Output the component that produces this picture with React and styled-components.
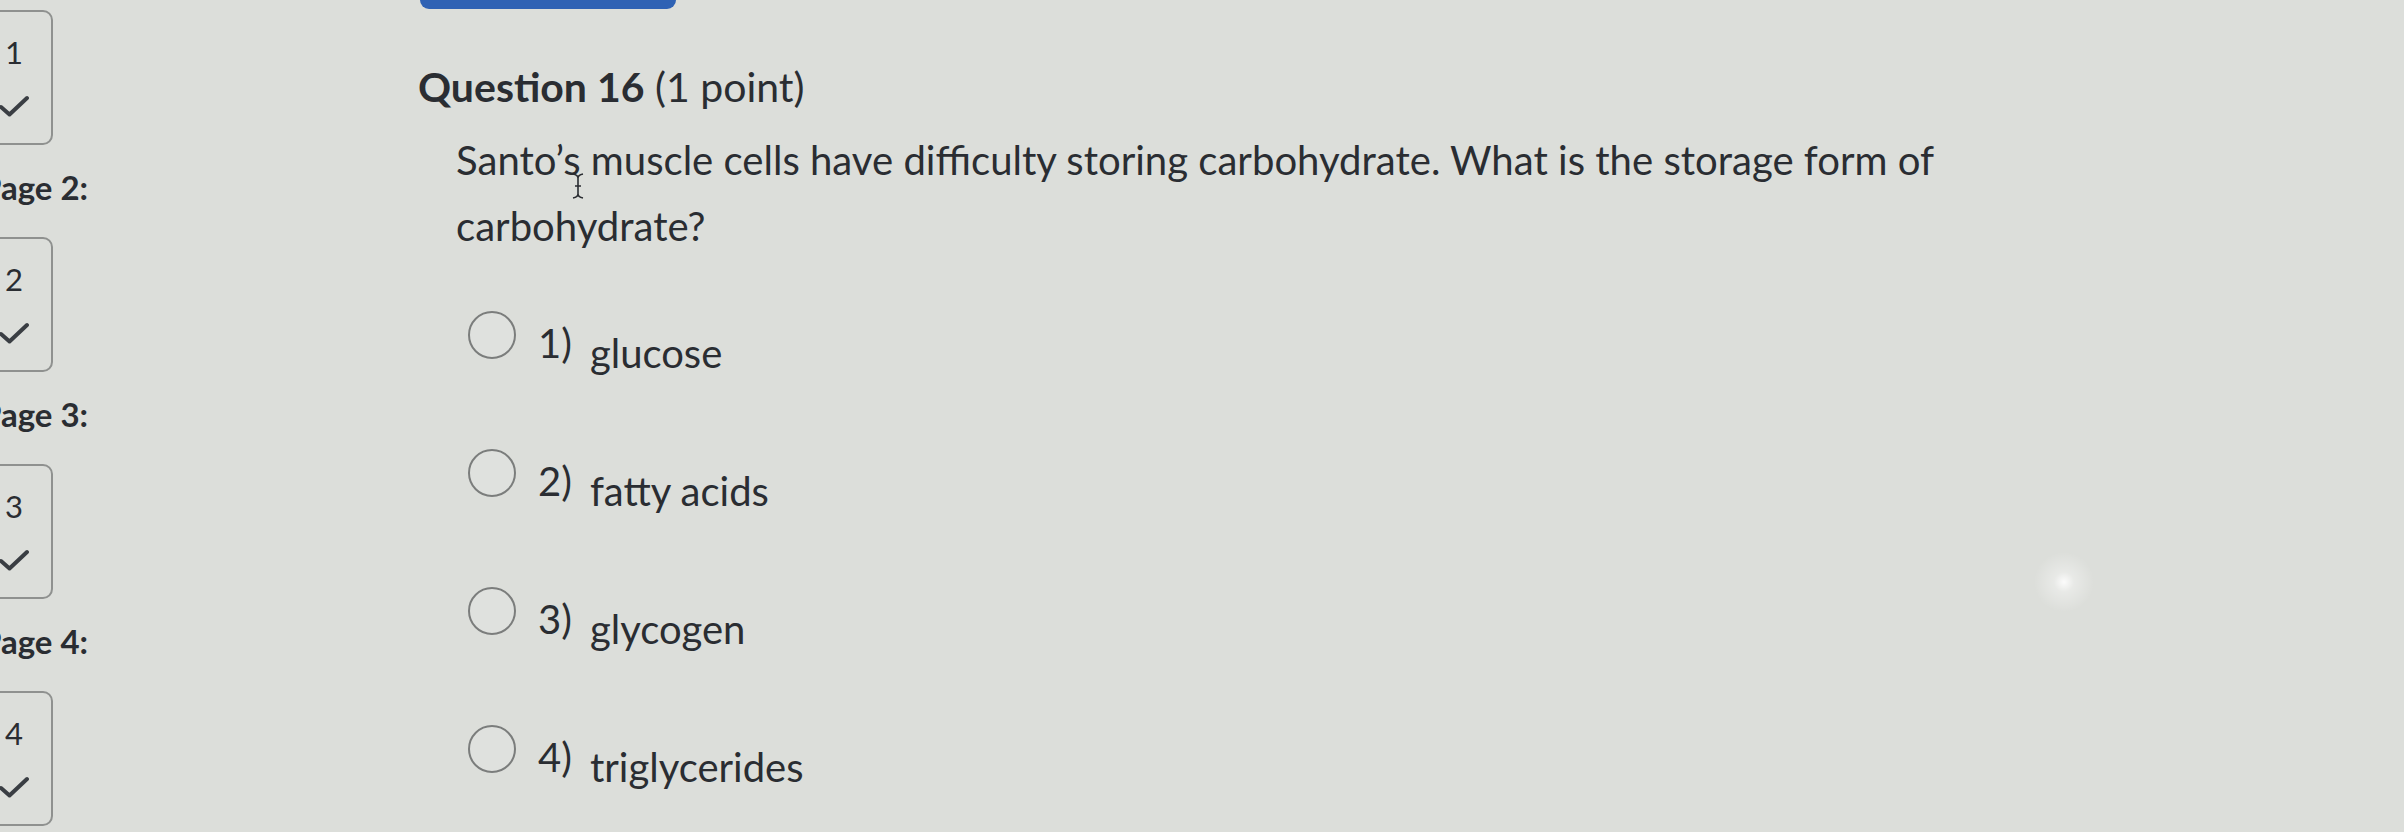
import React from 'react';
import styled, {createGlobalStyle} from 'styled-components';

const GlobalStyle = createGlobalStyle`
    html, body {
        margin: 0;
        padding: 0;
        height: 100%;
        overflow: hidden;
    }
    body {
        background-color: #dcdeda;
        background-image: radial-gradient(circle at 2064px 582px, rgba(255,255,255,0.9) 0, rgba(255,255,255,0.35) 10px, rgba(255,255,255,0) 30px);
        font-family: Lato, "Open Sans", sans-serif;
        color: #2a2d32;
    }
`;

const Page = styled.div`
    display: flex;
    width: 2404px;
    height: 832px;
`;

const Sidebar = styled.nav`
    flex: 0 0 437px;
    margin-left: -19px;
    display: flex;
    flex-direction: column;
    padding-top: 10px;
`;

const PageLabel = styled.div`
    font-size: 33px;
    line-height: 36px;
    font-weight: 700;
    margin: 24px 0 32px;
`;

const PageBox = styled.div`
    box-sizing: border-box;
    width: 78px;
    height: 135px;
    margin-left: -6px;
    padding-top: 25px;
    border: 2px solid #8f918f;
    border-radius: 10px;
    display: flex;
    flex-direction: column;
    align-items: center;
`;

const PageNum = styled.span`
    font-size: 31px;
    line-height: 31px;
`;

const Check = styled.svg`
    width: 30px;
    height: 24px;
    margin-top: 26px;
    fill: none;
    stroke: #3a3e43;
    stroke-width: 4;
    stroke-linecap: round;
    stroke-linejoin: round;
`;

const Main = styled.main`
    flex: 1;
    display: flex;
    flex-direction: column;
    align-items: flex-start;
`;

const TopBar = styled.div`
    width: 256px;
    height: 9px;
    margin-left: 2px;
    background-color: #2f62b4;
    border-radius: 0 0 10px 10px;
`;

const Heading = styled.h2`
    margin: 54px 0 0;
    font-size: 41px;
    line-height: 48px;
    font-weight: 400;

    strong {
        font-weight: 700;
    }
`;

const Prompt = styled.p`
    position: relative;
    margin: 16px 0 0;
    padding-left: 38px;
    font-size: 40.1px;
    line-height: 66px;
    max-width: 1540px;
`;

const Cursor = styled.svg`
    position: absolute;
    left: 154px;
    top: 46px;
    width: 12px;
    height: 26px;
    fill: none;
    stroke: #2a2d32;
    stroke-width: 1.6;
`;

const Options = styled.div`
    margin-top: 52px;
    padding-left: 50px;
    display: flex;
    flex-direction: column;
    gap: 90px;
`;

const Option = styled.label`
    display: flex;
    align-items: flex-start;
    height: 48px;
`;

const Radio = styled.span`
    box-sizing: border-box;
    flex: 0 0 48px;
    height: 48px;
    border: 2.5px solid #7b7d7c;
    border-radius: 50%;
    background-color: #dfe1de;
`;

const Num = styled.span`
    margin: 8px 0 0 22px;
    font-size: 40px;
    line-height: 48px;
`;

const Answer = styled.span`
    margin: 18px 0 0 18px;
    font-size: 40px;
    line-height: 48px;
`;

const pages = [1, 2, 3, 4];
const answers = ['glucose', 'fatty acids', 'glycogen', 'triglycerides'];

const App = () => (
    <>
        <GlobalStyle />
        <Page>
            <Sidebar>
                {pages.map(n => (
                    <React.Fragment key={n}>
                        {n > 1 && <PageLabel>Page {n}:</PageLabel>}
                        <PageBox>
                            <PageNum>{n}</PageNum>
                            <Check viewBox='0 0 30 24'>
                                <path d='M2 13 L10.5 20.5 L28 4' />
                            </Check>
                        </PageBox>
                    </React.Fragment>
                ))}
            </Sidebar>
            <Main>
                <TopBar />
                <Heading><strong>Question 16</strong> (1 point)</Heading>
                <Prompt>
                    Santo’s muscle cells have difficulty storing carbohydrate. What is the storage form of carbohydrate?
                    <Cursor viewBox='0 0 12 26'>
                        <path d='M1 1 Q6 2 6 5 Q6 2 11 1 M6 5 L6 21 M1 25 Q6 24 6 21 Q6 24 11 25 M3 13 L9 13' />
                    </Cursor>
                </Prompt>
                <Options>
                    {answers.map((a, i) => (
                        <Option key={a}>
                            <Radio />
                            <Num>{i + 1})</Num>
                            <Answer>{a}</Answer>
                        </Option>
                    ))}
                </Options>
            </Main>
        </Page>
    </>
);

export default App;
